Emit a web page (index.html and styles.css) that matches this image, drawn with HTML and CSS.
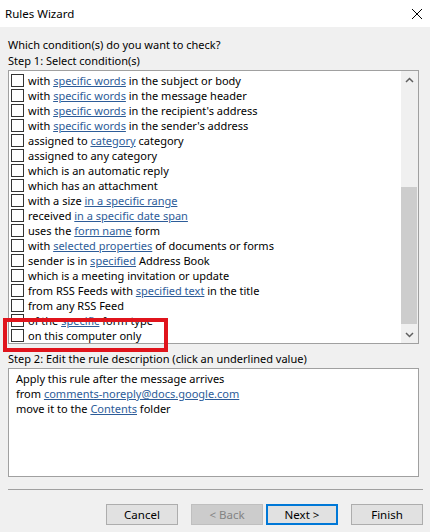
FILE: index.html
```html
<!DOCTYPE html>
<html>
<head>
<meta charset="utf-8">
<title>Rules Wizard</title>
<link rel="stylesheet" href="styles.css">
</head>
<body>
<div class="titlebar">
  <span class="title">Rules Wizard</span>
  <svg class="close" width="12" height="12" viewBox="0 0 12 12"><path d="M1 1 L11 11 M11 1 L1 11" stroke="#000" stroke-width="1" fill="none"/></svg>
</div>
<div class="content">
  <div class="label">Which condition(s) do you want to check?</div>
  <div class="label">Step 1: Select condition(s)</div>
  <div class="listbox">
    <ul class="items">
      <li><span class="cb"></span><span>with <a class="lnk">specific words</a> in the subject or body</span></li>
      <li><span class="cb"></span><span>with <a class="lnk">specific words</a> in the message header</span></li>
      <li><span class="cb"></span><span>with <a class="lnk">specific words</a> in the recipient's address</span></li>
      <li><span class="cb"></span><span>with <a class="lnk">specific words</a> in the sender's address</span></li>
      <li><span class="cb"></span><span>assigned to <a class="lnk">category</a> category</span></li>
      <li><span class="cb"></span><span>assigned to any category</span></li>
      <li><span class="cb"></span><span>which is an automatic reply</span></li>
      <li><span class="cb"></span><span>which has an attachment</span></li>
      <li><span class="cb"></span><span>with a size <a class="lnk">in a specific range</a></span></li>
      <li><span class="cb"></span><span>received <a class="lnk">in a specific date span</a></span></li>
      <li><span class="cb"></span><span>uses the <a class="lnk">form name</a> form</span></li>
      <li><span class="cb"></span><span>with <a class="lnk">selected properties</a> of documents or forms</span></li>
      <li><span class="cb"></span><span>sender is in <a class="lnk">specified</a> Address Book</span></li>
      <li><span class="cb"></span><span>which is a meeting invitation or update</span></li>
      <li><span class="cb"></span><span>from RSS Feeds with <a class="lnk">specified text</a> in the title</span></li>
      <li><span class="cb"></span><span>from any RSS Feed</span></li>
      <li><span class="cb"></span><span>of the <a class="lnk">specific</a> form type</span></li>
      <li><span class="cb"></span><span>on this computer only</span></li>
    </ul>
    <div class="scrollbar">
      <div class="arrow"><svg width="9" height="6" viewBox="0 0 9 6"><path d="M1 5 L4.5 1.5 L8 5" stroke="#606060" stroke-width="1.5" fill="none"/></svg></div>
      <div class="track"><div class="thumb"></div></div>
      <div class="arrow"><svg width="9" height="6" viewBox="0 0 9 6"><path d="M1 1 L4.5 4.5 L8 1" stroke="#606060" stroke-width="1.5" fill="none"/></svg></div>
    </div>
  </div>
  <div class="label step2">Step 2: Edit the rule description (click an underlined value)</div>
  <div class="desc">
    <div>Apply this rule after the message arrives</div>
    <div>from <a class="lnk">comments-noreply@docs.google.com</a></div>
    <div>move it to the <a class="lnk">Contents</a> folder</div>
  </div>
  <div class="sep"></div>
  <div class="buttons">
    <button class="btn">Cancel</button>
    <button class="btn disabled gap-small">&lt; Back</button>
    <button class="btn default">Next &gt;</button>
    <button class="btn">Finish</button>
  </div>
</div>
<div class="highlight"></div>
</body>
</html>
```
FILE: styles.css
```css
* { box-sizing: border-box; }
html, body { margin: 0; padding: 0; }
body {
  width: 430px;
  height: 532px;
  background: #f0f0f0;
  font-family: "Noto Sans", "Open Sans", sans-serif;
  font-size: 11px;
  color: #000;
  overflow: hidden;
  position: relative;
}
.titlebar {
  height: 27px;
  background: #fff;
  display: flex;
  align-items: center;
  justify-content: space-between;
  padding: 0 7px 0 5px;
}
.title { font-size: 11.5px; }
.close { display: block; }
.content { padding: 10px 7px 0 8px; }
.label { height: 16px; line-height: 16px; white-space: nowrap; }
.listbox {
  margin-top: 1px;
  width: 411px;
  height: 274px;
  border: 1px solid #a0a0a0;
  background: #fff;
  display: flex;
}
.items {
  flex: 1;
  list-style: none;
  margin: 0;
  padding: 2px 0 0 2px;
  overflow: hidden;
}
.items li {
  height: 15px;
  line-height: 15px;
  display: flex;
  align-items: center;
  gap: 4px;
  white-space: nowrap;
}
.cb {
  flex: none;
  width: 13px;
  height: 13px;
  border: 1px solid #333;
  background: #fff;
}
.lnk { color: #2d5c99; text-decoration: underline; }
.scrollbar {
  flex: none;
  width: 17px;
  background: #f0f0f0;
  display: flex;
  flex-direction: column;
}
.arrow {
  height: 17px;
  display: flex;
  align-items: center;
  justify-content: center;
}
.arrow svg { display: block; }
.track { flex: 1; }
.thumb {
  margin: 99px 1px 0 0;
  height: 137px;
  background: #cdcdcd;
}
.step2 { margin-top: 7px; }
.desc {
  margin-top: 1px;
  width: 411px;
  height: 109px;
  border: 1px solid #a0a0a0;
  background: #fff;
  padding: 2px 7px;
  line-height: 15px;
  white-space: nowrap;
}
.sep {
  margin-top: 12px;
  width: 415px;
  height: 1px;
  background: #a0a0a0;
}
.buttons {
  margin-top: 14px;
  display: flex;
  justify-content: flex-end;
  gap: 13px;
}
.btn {
  width: 72px;
  height: 21px;
  padding: 0;
  background: #e1e1e1;
  border: 1px solid #adadad;
  font: inherit;
  font-size: 11.5px;
  color: #000;
  display: flex;
  align-items: center;
  justify-content: center;
}
.btn.disabled {
  background: #cccccc;
  border-color: #bfbfbf;
  color: #838383;
}
.btn.gap-small { margin-right: -10px; }
.btn.default { border: 2px solid #0078d7; }
.highlight {
  position: absolute;
  left: 3px;
  top: 318px;
  width: 165px;
  height: 34px;
  border: 4px solid #e0141c;
}
```
